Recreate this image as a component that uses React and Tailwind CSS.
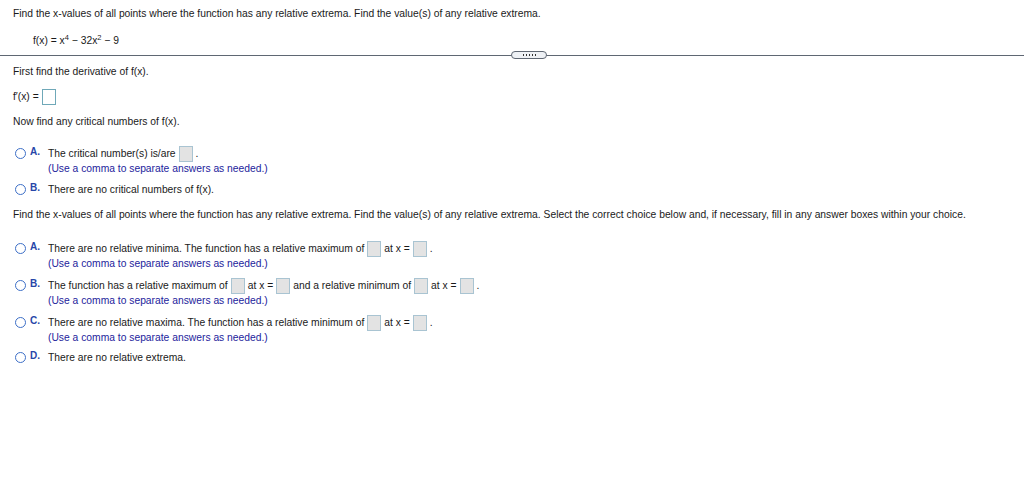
import React from 'react';

// Homework question page: relative extrema of f(x)
const Box = ({ teal }) => (
  <span
    className={`inline-block align-middle w-[14px] h-[16px] mx-[3px] border ${
      teal ? 'bg-white border-[#6fa8b8]' : 'bg-[#e3e3e3] border-[#a9c4d2]'
    }`}
  />
);

const Radio = ({ letter, children, hint, className = '' }) => (
  <div className={`flex items-start ${className}`}>
    <span className="mt-[1px] ml-[15px] w-[11px] h-[11px] rounded-full border border-[#3d6fc7] bg-white shrink-0" />
    <span className="ml-[4px] w-[18px] text-[#2746a8] font-bold text-[10px] leading-[13px] -mt-[2px]">{letter}.</span>
    <div>
      <div className="leading-[13px] h-[13px] flex items-center">{children}</div>
      {hint && (
        <div className="mt-[2px] leading-[13px] text-[#1d1d9c]">
          (Use a comma to separate answers as needed.)
        </div>
      )}
    </div>
  </div>
);

export default function App() {
  return (
    <div className="w-[1024px] h-[494px] bg-white text-[#1a1a1a] text-[10.3px] font-['Liberation_Sans',Arial,sans-serif] overflow-hidden">
      <div className="pt-[7px] pl-[13px] leading-[13px]">
        Find the x-values of all points where the function has any relative extrema. Find the value(s) of any relative extrema.
      </div>
      <div className="mt-[14px] pl-[33px] leading-[13px]">
        f(x) = x<span className="relative -top-[4px] text-[7.5px]">4</span> − 32x
        <span className="relative -top-[4px] text-[7.5px]">2</span> − 9
      </div>

      <div className="relative mt-[5px] h-[5px]">
        <div className="absolute left-0 right-0 top-[2px] h-px bg-[#5f6773]" />
        <div className="absolute left-[511px] top-[-2px] w-[36px] h-[8px] rounded-[4px] border border-[#5f6773] bg-[#eef1f5] flex items-center justify-center gap-[2px]">
          {[0, 1, 2, 3, 4].map((i) => (
            <span key={i} className="w-px h-[2px] bg-[#333]" />
          ))}
        </div>
      </div>

      <div className="mt-[7px] pl-[13px] leading-[13px]">First find the derivative of f(x).</div>
      <div className="mt-[11px] pl-[13px] flex items-center h-[16px]">
        f′(x) =<Box teal />
      </div>
      <div className="mt-[10px] pl-[13px] leading-[13px]">Now find any critical numbers of f(x).</div>

      <Radio letter="A" hint className="mt-[19px]">
        The critical number(s) is/are<Box />.
      </Radio>
      <Radio letter="B" className="mt-[8px]">There are no critical numbers of f(x).</Radio>

      <div className="mt-[12px] pl-[13px] leading-[13px]">
        Find the x-values of all points where the function has any relative extrema. Find the value(s) of any relative extrema. Select the correct choice below and, if necessary, fill in any answer boxes within your choice.
      </div>

      <Radio letter="A" hint className="mt-[21px]">
        There are no relative minima. The function has a relative maximum of<Box />at x =<Box />.
      </Radio>
      <Radio letter="B" hint className="mt-[9px]">
        The function has a relative maximum of<Box />at x =<Box />and a relative minimum of<Box />at x =<Box />.
      </Radio>
      <Radio letter="C" hint className="mt-[9px]">
        There are no relative maxima. The function has a relative minimum of<Box />at x =<Box />.
      </Radio>
      <Radio letter="D" className="mt-[7px]">There are no relative extrema.</Radio>
    </div>
  );
}
